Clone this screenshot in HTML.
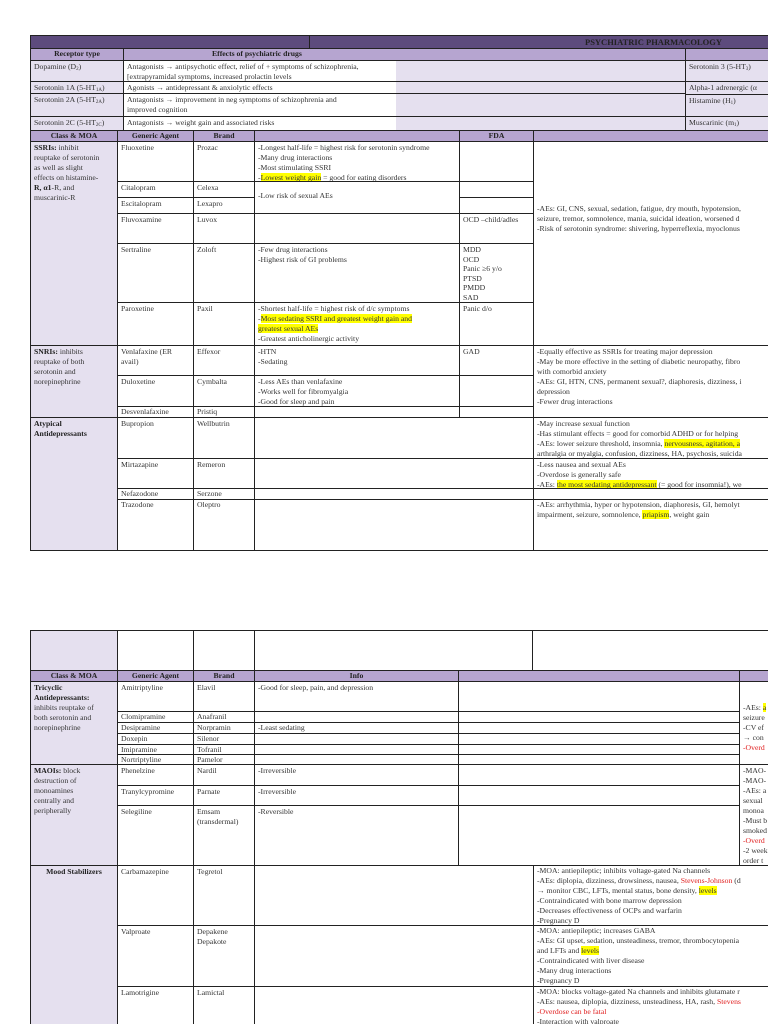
<!DOCTYPE html>
<html><head><meta charset="utf-8"><style>
html,body{margin:0;padding:0;width:768px;height:1024px;overflow:hidden;background:#fff;position:relative}
.c{position:absolute;box-sizing:border-box;border:1px solid #222;font:7.7px/10px "Liberation Serif",serif;color:#333;padding:1px 3px;white-space:nowrap;overflow:hidden}
.dk{background:#5d4b7d}
.lh{background:#b6a5d0;font-weight:bold;color:#222;text-align:center;padding:0}
.lv{background:#e5e0ef}
.hl{background:#ffff00}
.red{color:#e02020}
b{color:#222}
sub{font-size:5px;vertical-align:-1px;line-height:0}
</style></head><body>
<div class="c dk" style="left:30px;top:35px;width:280px;height:14px"></div>
<div class="c dk" style="left:309px;top:35px;width:470px;height:14px;color:#222;font-weight:bold;font-size:8.5px;padding:1px 0 0 275px">PSYCHIATRIC PHARMACOLOGY</div>
<div class="c lh" style="left:30px;top:48px;width:94px;height:13px">Receptor type</div>
<div class="c lh" style="left:123px;top:48px;width:563px;height:13px;text-align:left;padding-left:88px">Effects of psychiatric drugs</div>
<div class="c lh" style="left:685px;top:48px;width:90px;height:13px"></div>
<div class="c lv" style="left:30px;top:60px;width:94px;height:22px">Dopamine (D<sub>2</sub>)</div>
<div class="c lv" style="left:123px;top:60px;width:563px;height:22px;background:linear-gradient(90deg,#fff 0 272px,#e5e0ef 272px)">Antagonists → antipsychotic effect, relief of + symptoms of schizophrenia,<br>[extrapyramidal symptoms, increased prolactin levels</div>
<div class="c lv" style="left:30px;top:81px;width:94px;height:13px">Serotonin 1A (5-HT<sub>1A</sub>)</div>
<div class="c lv" style="left:123px;top:81px;width:563px;height:13px;background:linear-gradient(90deg,#fff 0 272px,#e5e0ef 272px)">Agonists → antidepressant &amp; anxiolytic effects</div>
<div class="c lv" style="left:30px;top:93px;width:94px;height:24px">Serotonin 2A (5-HT<sub>2A</sub>)</div>
<div class="c lv" style="left:123px;top:93px;width:563px;height:24px;background:linear-gradient(90deg,#fff 0 272px,#e5e0ef 272px)">Antagonists → improvement in neg symptoms of schizophrenia and<br>improved cognition</div>
<div class="c lv" style="left:30px;top:116px;width:94px;height:15px">Serotonin 2C (5-HT<sub>2C</sub>)</div>
<div class="c lv" style="left:123px;top:116px;width:563px;height:15px;background:linear-gradient(90deg,#fff 0 272px,#e5e0ef 272px)">Antagonists → weight gain and associated risks</div>
<div class="c lv" style="left:685px;top:60px;width:90px;height:22px;padding-top:1px">Serotonin 3 (5-HT<sub>3</sub>)</div>
<div class="c lv" style="left:685px;top:81px;width:90px;height:14px">Alpha-1 adrenergic (α</div>
<div class="c lv" style="left:685px;top:94px;width:90px;height:23px">Histamine (H<sub>1</sub>)</div>
<div class="c lv" style="left:685px;top:116px;width:90px;height:15px">Muscarinic (m<sub>1</sub>)</div>
<div class="c lh" style="left:30px;top:130px;width:88px;height:12px">Class &amp; MOA</div>
<div class="c lh" style="left:117px;top:130px;width:77px;height:12px">Generic Agent</div>
<div class="c lh" style="left:193px;top:130px;width:62px;height:12px">Brand</div>
<div class="c lh" style="left:254px;top:130px;width:206px;height:12px"></div>
<div class="c lh" style="left:459px;top:130px;width:75px;height:12px">FDA</div>
<div class="c lh" style="left:533px;top:130px;width:240px;height:12px"></div>
<div class="c lv" style="left:30px;top:141px;width:88px;height:205px"><b>SSRIs:</b> inhibit<br>reuptake of serotonin<br>as well as slight<br>effects on histamine-<br><b>R, α1</b>-R, and<br>muscarinic-R</div>
<div class="c lv" style="left:30px;top:345px;width:88px;height:73px"><b>SNRIs:</b> inhibits<br>reuptake of both<br>serotonin and<br>norepinephrine</div>
<div class="c lv" style="left:30px;top:417px;width:88px;height:134px"><b>Atypical<br>Antidepressants</b></div>
<div class="c" style="left:117px;top:141px;width:77px;height:41px">Fluoxetine</div><div class="c" style="left:193px;top:141px;width:62px;height:41px">Prozac</div>
<div class="c" style="left:117px;top:181px;width:77px;height:17px">Citalopram</div><div class="c" style="left:193px;top:181px;width:62px;height:17px">Celexa</div>
<div class="c" style="left:117px;top:197px;width:77px;height:17px">Escitalopram</div><div class="c" style="left:193px;top:197px;width:62px;height:17px">Lexapro</div>
<div class="c" style="left:117px;top:213px;width:77px;height:31px">Fluvoxamine</div><div class="c" style="left:193px;top:213px;width:62px;height:31px">Luvox</div>
<div class="c" style="left:117px;top:243px;width:77px;height:60px">Sertraline</div><div class="c" style="left:193px;top:243px;width:62px;height:60px">Zoloft</div>
<div class="c" style="left:117px;top:302px;width:77px;height:44px">Paroxetine</div><div class="c" style="left:193px;top:302px;width:62px;height:44px">Paxil</div>
<div class="c" style="left:117px;top:345px;width:77px;height:31px">Venlafaxine (ER<br>avail)</div><div class="c" style="left:193px;top:345px;width:62px;height:31px">Effexor</div>
<div class="c" style="left:117px;top:375px;width:77px;height:32px">Duloxetine</div><div class="c" style="left:193px;top:375px;width:62px;height:32px">Cymbalta</div>
<div class="c" style="left:117px;top:406px;width:77px;height:12px;padding-top:0">Desvenlafaxine</div><div class="c" style="left:193px;top:406px;width:62px;height:12px;padding-top:0">Pristiq</div>
<div class="c" style="left:117px;top:417px;width:77px;height:42px">Bupropion</div><div class="c" style="left:193px;top:417px;width:62px;height:42px">Wellbutrin</div>
<div class="c" style="left:117px;top:458px;width:77px;height:31px">Mirtazapine</div><div class="c" style="left:193px;top:458px;width:62px;height:31px">Remeron</div>
<div class="c" style="left:117px;top:488px;width:77px;height:12px;padding-top:0">Nefazodone</div><div class="c" style="left:193px;top:488px;width:62px;height:12px;padding-top:0">Serzone</div>
<div class="c" style="left:117px;top:499px;width:77px;height:52px;padding-top:0">Trazodone</div><div class="c" style="left:193px;top:499px;width:62px;height:52px;padding-top:0">Oleptro</div>
<div class="c" style="left:254px;top:141px;width:206px;height:41px">-Longest half-life = highest risk for serotonin syndrome<br>-Many drug interactions<br>-Most stimulating SSRI<br>-<span class="hl">Lowest weight gain</span> = good for eating disorders</div>
<div class="c" style="left:254px;top:181px;width:206px;height:33px;padding-top:9px">-Low risk of sexual AEs</div>
<div class="c" style="left:254px;top:213px;width:206px;height:31px"></div>
<div class="c" style="left:254px;top:243px;width:206px;height:60px">-Few drug interactions<br>-Highest risk of GI problems</div>
<div class="c" style="left:254px;top:302px;width:206px;height:44px">-Shortest half-life = highest risk of d/c symptoms<br>-<span class="hl">Most sedating SSRI and greatest weight gain and<br>greatest sexual AEs</span><br>-Greatest anticholinergic activity</div>
<div class="c" style="left:254px;top:345px;width:206px;height:31px">-HTN<br>-Sedating</div>
<div class="c" style="left:254px;top:375px;width:206px;height:32px">-Less AEs than venlafaxine<br>-Works well for fibromyalgia<br>-Good for sleep and pain</div>
<div class="c" style="left:254px;top:406px;width:206px;height:12px"></div>
<div class="c" style="left:254px;top:417px;width:280px;height:42px"></div>
<div class="c" style="left:254px;top:458px;width:280px;height:31px"></div>
<div class="c" style="left:254px;top:488px;width:280px;height:12px"></div>
<div class="c" style="left:254px;top:499px;width:280px;height:52px"></div>
<div class="c" style="left:459px;top:141px;width:75px;height:41px"></div>
<div class="c" style="left:459px;top:181px;width:75px;height:17px"></div>
<div class="c" style="left:459px;top:197px;width:75px;height:17px"></div>
<div class="c" style="left:459px;top:213px;width:75px;height:31px">OCD –child/adles</div>
<div class="c" style="left:459px;top:243px;width:75px;height:60px;line-height:9.6px">MDD<br>OCD<br>Panic ≥6 y/o<br>PTSD<br>PMDD<br>SAD</div>
<div class="c" style="left:459px;top:302px;width:75px;height:44px">Panic d/o</div>
<div class="c" style="left:459px;top:345px;width:75px;height:31px">GAD</div>
<div class="c" style="left:459px;top:375px;width:75px;height:32px"></div>
<div class="c" style="left:459px;top:406px;width:75px;height:12px"></div>
<div class="c" style="left:533px;top:141px;width:240px;height:205px;padding-top:62px">-AEs: GI, CNS, sexual, sedation, fatigue, dry mouth, hypotension,<br>seizure, tremor, somnolence, mania, suicidal ideation, worsened d<br>-Risk of serotonin syndrome: shivering, hyperreflexia, myoclonus</div>
<div class="c" style="left:533px;top:345px;width:240px;height:73px">-Equally effective as SSRIs for treating major depression<br>-May be more effective in the setting of diabetic neuropathy, fibro<br>with comorbid anxiety<br>-AEs: GI, HTN, CNS, permanent sexual?, diaphoresis, dizziness, i<br>depression<br>-Fewer drug interactions</div>
<div class="c" style="left:533px;top:417px;width:240px;height:42px">-May increase sexual function<br>-Has stimulant effects = good for comorbid ADHD or for helping<br>-AEs: lower seizure threshold, insomnia, <span class="hl">nervousness, agitation, a</span><br>arthralgia or myalgia, confusion, dizziness, HA, psychosis, suicida</div>
<div class="c" style="left:533px;top:458px;width:240px;height:31px">-Less nausea and sexual AEs<br>-Overdose is generally safe<br>-AEs: <span class="hl">the most sedating antidepressant</span> (= good for insomnia!), we</div>
<div class="c" style="left:533px;top:488px;width:240px;height:12px"></div>
<div class="c" style="left:533px;top:499px;width:240px;height:52px;padding-top:0">-AEs: arrhythmia, hyper or hypotension, diaphoresis, GI, hemolyt<br>impairment, seizure, somnolence, <span class="hl">priapism</span>, weight gain</div>

<div class="c lv" style="left:30px;top:630px;width:88px;height:41px"></div>
<div class="c" style="left:117px;top:630px;width:77px;height:41px"></div>
<div class="c" style="left:193px;top:630px;width:62px;height:41px"></div>
<div class="c" style="left:254px;top:630px;width:279px;height:41px"></div>
<div class="c" style="left:532px;top:630px;width:245px;height:41px"></div>
<div class="c lh" style="left:30px;top:670px;width:88px;height:12px">Class &amp; MOA</div>
<div class="c lh" style="left:117px;top:670px;width:77px;height:12px">Generic Agent</div>
<div class="c lh" style="left:193px;top:670px;width:62px;height:12px">Brand</div>
<div class="c lh" style="left:254px;top:670px;width:205px;height:12px">Info</div>
<div class="c lh" style="left:458px;top:670px;width:282px;height:12px"></div>
<div class="c lh" style="left:739px;top:670px;width:40px;height:12px"></div>
<div class="c lv" style="left:30px;top:681px;width:88px;height:84px"><b>Tricyclic<br>Antidepressants:</b><br>inhibits reuptake of<br>both serotonin and<br>norepinephrine</div>
<div class="c lv" style="left:30px;top:764px;width:88px;height:102px"><b>MAOIs:</b> block<br>destruction of<br>monoamines<br>centrally and<br>peripherally</div>
<div class="c lv" style="left:30px;top:865px;width:88px;height:170px;text-align:center"><b>Mood Stabilizers</b></div>
<div class="c" style="left:117px;top:681px;width:77px;height:31px">Amitriptyline</div><div class="c" style="left:193px;top:681px;width:62px;height:31px">Elavil</div><div class="c" style="left:254px;top:681px;width:205px;height:31px">-Good for sleep, pain, and depression</div><div class="c" style="left:458px;top:681px;width:282px;height:31px"></div>
<div class="c" style="left:117px;top:711px;width:77px;height:12px;padding-top:0">Clomipramine</div><div class="c" style="left:193px;top:711px;width:62px;height:12px;padding-top:0">Anafranil</div><div class="c" style="left:254px;top:711px;width:205px;height:12px"></div><div class="c" style="left:458px;top:711px;width:282px;height:12px"></div>
<div class="c" style="left:117px;top:722px;width:77px;height:12px;padding-top:0">Desipramine</div><div class="c" style="left:193px;top:722px;width:62px;height:12px;padding-top:0">Norpramin</div><div class="c" style="left:254px;top:722px;width:205px;height:12px;padding-top:0">-Least sedating</div><div class="c" style="left:458px;top:722px;width:282px;height:12px"></div>
<div class="c" style="left:117px;top:733px;width:77px;height:12px;padding-top:0">Doxepin</div><div class="c" style="left:193px;top:733px;width:62px;height:12px;padding-top:0">Silenor</div><div class="c" style="left:254px;top:733px;width:205px;height:12px"></div><div class="c" style="left:458px;top:733px;width:282px;height:12px"></div>
<div class="c" style="left:117px;top:744px;width:77px;height:11px;padding-top:0">Imipramine</div><div class="c" style="left:193px;top:744px;width:62px;height:11px;padding-top:0">Tofranil</div><div class="c" style="left:254px;top:744px;width:205px;height:11px"></div><div class="c" style="left:458px;top:744px;width:282px;height:11px"></div>
<div class="c" style="left:117px;top:754px;width:77px;height:11px;padding-top:0">Nortriptyline</div><div class="c" style="left:193px;top:754px;width:62px;height:11px;padding-top:0">Pamelor</div><div class="c" style="left:254px;top:754px;width:205px;height:11px"></div><div class="c" style="left:458px;top:754px;width:282px;height:11px"></div>
<div class="c" style="left:117px;top:764px;width:77px;height:22px">Phenelzine</div><div class="c" style="left:193px;top:764px;width:62px;height:22px">Nardil</div><div class="c" style="left:254px;top:764px;width:205px;height:22px">-Irreversible</div><div class="c" style="left:458px;top:764px;width:282px;height:22px"></div>
<div class="c" style="left:117px;top:785px;width:77px;height:21px">Tranylcypromine</div><div class="c" style="left:193px;top:785px;width:62px;height:21px">Parnate</div><div class="c" style="left:254px;top:785px;width:205px;height:21px">-Irreversible</div><div class="c" style="left:458px;top:785px;width:282px;height:21px"></div>
<div class="c" style="left:117px;top:805px;width:77px;height:61px">Selegiline</div><div class="c" style="left:193px;top:805px;width:62px;height:61px">Emsam<br>(transdermal)</div><div class="c" style="left:254px;top:805px;width:205px;height:61px">-Reversible</div><div class="c" style="left:458px;top:805px;width:282px;height:61px"></div>
<div class="c" style="left:739px;top:681px;width:40px;height:84px;padding-top:21px">-AEs: <span class="hl">a</span><br>seizure<br>-CV ef<br>→ con<br><span class="red">-Overd</span></div>
<div class="c" style="left:739px;top:764px;width:40px;height:102px">-MAO-<br>-MAO-<br>-AEs: a<br>sexual<br>monoa<br>-Must b<br>smoked<br><span class="red">-Overd</span><br>-2 week<br>order t</div>
<div class="c" style="left:117px;top:865px;width:77px;height:61px">Carbamazepine</div><div class="c" style="left:193px;top:865px;width:62px;height:61px">Tegretol</div><div class="c" style="left:254px;top:865px;width:280px;height:61px"></div>
<div class="c" style="left:533px;top:865px;width:245px;height:61px;padding-top:0">-MOA: antiepileptic; inhibits voltage-gated Na channels<br>-AEs: diplopia, dizziness, drowsiness, nausea, <span class="red">Stevens-Johnson</span> (d<br>→ monitor CBC, LFTs, mental status, bone density, <span class="hl">levels</span><br>-Contraindicated with bone marrow depression<br>-Decreases effectiveness of OCPs and warfarin<br>-Pregnancy D</div>
<div class="c" style="left:117px;top:925px;width:77px;height:62px">Valproate</div><div class="c" style="left:193px;top:925px;width:62px;height:62px">Depakene<br>Depakote</div><div class="c" style="left:254px;top:925px;width:280px;height:62px"></div>
<div class="c" style="left:533px;top:925px;width:245px;height:62px;padding-top:0">-MOA: antiepileptic; increases GABA<br>-AEs: GI upset, sedation, unsteadiness, tremor, thrombocytopenia<br>and LFTs and <span class="hl">levels</span><br>-Contraindicated with liver disease<br>-Many drug interactions<br>-Pregnancy D</div>
<div class="c" style="left:117px;top:986px;width:77px;height:50px">Lamotrigine</div><div class="c" style="left:193px;top:986px;width:62px;height:50px">Lamictal</div><div class="c" style="left:254px;top:986px;width:280px;height:50px"></div>
<div class="c" style="left:533px;top:986px;width:245px;height:50px;padding-top:0">-MOA: blocks voltage-gated Na channels and inhibits glutamate r<br>-AEs: nausea, diplopia, dizziness, unsteadiness, HA, rash, <span class="red">Stevens</span><br><span class="red">-Overdose can be fatal</span><br>-Interaction with valproate</div>
</body></html>
